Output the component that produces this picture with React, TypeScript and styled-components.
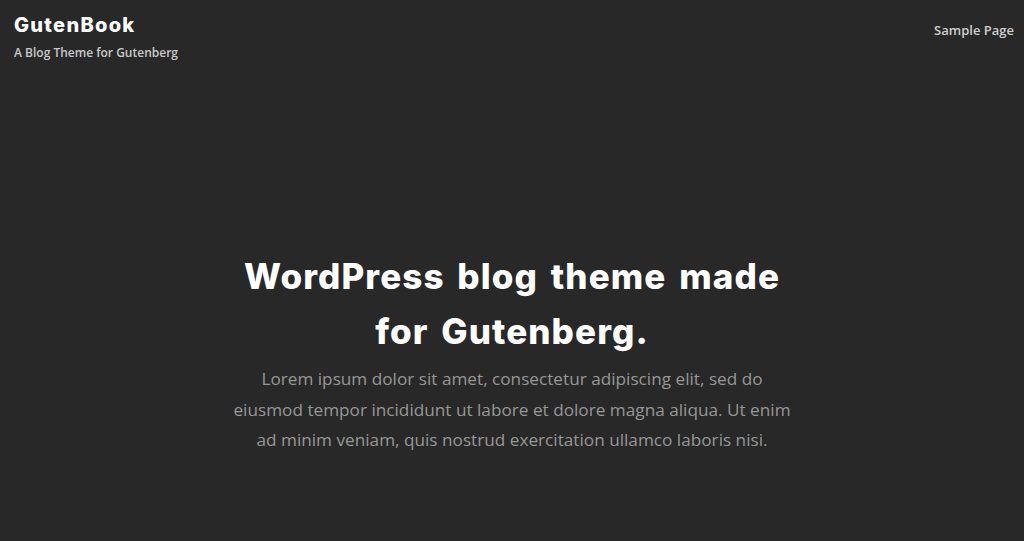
import React from 'react'
import styled, { createGlobalStyle } from 'styled-components'

const GlobalStyle = createGlobalStyle`
  html, body {
    margin: 0;
    padding: 0;
    background: #282828;
  }
  body {
    font-family: 'Open Sans', 'Liberation Sans', sans-serif;
    -webkit-font-smoothing: antialiased;
  }
`

function App() {
  return (
    <>
      <GlobalStyle />
      <Page>
        <Header>
          <Branding>
            <SiteTitle href='#'>GutenBook</SiteTitle>
            <Tagline>A Blog Theme for Gutenberg</Tagline>
          </Branding>
          <Nav>
            <NavLink href='#'>Sample Page</NavLink>
          </Nav>
        </Header>
        <Hero>
          <HeroTitle>WordPress blog theme made for Gutenberg.</HeroTitle>
          <HeroText>
            Lorem ipsum dolor sit amet, consectetur adipiscing elit, sed do eiusmod tempor incididunt ut labore et
            dolore magna aliqua. Ut enim ad minim veniam, quis nostrud exercitation ullamco laboris nisi.
          </HeroText>
        </Hero>
      </Page>
    </>
  )
}
export default App

const Page = styled('div')({
  minHeight: '541px',
  background: '#282828',
  display: 'flex',
  flexDirection: 'column'
})

const Header = styled('header')({
  display: 'flex',
  justifyContent: 'space-between',
  alignItems: 'flex-start',
  padding: '12px 10px 0 14px'
})

const Branding = styled('div')({
  display: 'flex',
  flexDirection: 'column'
})

const SiteTitle = styled('a')({
  fontFamily: "Inter, 'Liberation Sans', sans-serif",
  fontWeight: 800,
  fontSize: '20px',
  lineHeight: '26px',
  letterSpacing: '1.3px',
  color: '#ffffff',
  textDecoration: 'none'
})

const Tagline = styled('p')({
  margin: '6px 0 0',
  fontSize: '12px',
  fontWeight: 600,
  lineHeight: '18px',
  color: '#c8c8c8'
})

const Nav = styled('nav')({
  display: 'flex',
  paddingTop: '9px'
})

const NavLink = styled('a')({
  fontSize: '13px',
  fontWeight: 600,
  color: '#cfcfcf',
  textDecoration: 'none'
})

const Hero = styled('section')({
  margin: '187px auto 0',
  maxWidth: '580px',
  textAlign: 'center'
})

const HeroTitle = styled('h1')({
  margin: '0 auto',
  maxWidth: '560px',
  fontFamily: "Inter, 'Liberation Sans', sans-serif",
  fontWeight: 800,
  fontSize: '35px',
  lineHeight: '55px',
  letterSpacing: '1.1px',
  wordSpacing: '4px',
  color: '#ffffff'
})

const HeroText = styled('p')({
  margin: '5px auto 0',
  maxWidth: '565px',
  fontSize: '17.2px',
  lineHeight: '30.5px',
  color: '#979797'
})
